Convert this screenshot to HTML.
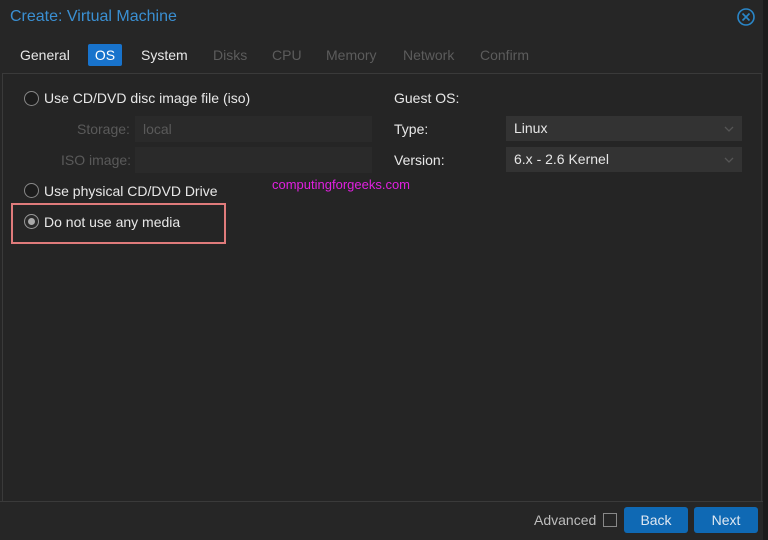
<!DOCTYPE html>
<html><head><style>
*{margin:0;padding:0;box-sizing:border-box}
body{width:768px;height:540px;background:#262626;font-family:"Liberation Sans",sans-serif;position:relative;overflow:hidden;color:#e8e8e8;font-size:14px}
.a{position:absolute;white-space:nowrap}
.tab{position:absolute;top:44px;height:22px;line-height:22px;font-size:14px}
.dis{color:#5c5c5c}
.radio{position:absolute;width:15px;height:15px;border-radius:50%;border:1.5px solid #888;background:#1c1c1c}
.lbl{color:#5a5a5a}
.field{position:absolute;background:#2a2a2a}
.sel{position:absolute;background:#333;height:25px;line-height:25px;padding-left:8px;color:#e6e6e6}
.btn{position:absolute;top:507px;height:26px;background:#0f69b4;border-radius:3px;color:#dfe8f2;text-align:center;line-height:26px}
</style></head><body>
<div class="a" style="left:10px;top:8px;font-size:16px;color:#3a8fd2">Create: Virtual Machine</div>
<svg class="a" style="left:736px;top:7px" width="20" height="20"><circle cx="10" cy="10" r="8" fill="none" stroke="#2a86c8" stroke-width="1.6"/><path d="M6.5 6.5L13.5 13.5M13.5 6.5L6.5 13.5" stroke="#2a86c8" stroke-width="1.6"/></svg>
<div class="tab" style="left:20px">General</div>
<div class="tab" style="left:88px;width:34px;background:#1873cc;border-radius:2px;text-align:center;color:#fff">OS</div>
<div class="tab" style="left:141px">System</div>
<div class="tab dis" style="left:213px">Disks</div>
<div class="tab dis" style="left:272px">CPU</div>
<div class="tab dis" style="left:326px">Memory</div>
<div class="tab dis" style="left:403px">Network</div>
<div class="tab dis" style="left:480px">Confirm</div>
<div class="a" style="left:2px;top:73px;width:760px;height:428px;background:#252525;border-top:1px solid #3a3a3a;border-left:1px solid #3a3a3a;border-right:1px solid #333"></div>
<div class="a" style="left:763px;top:0;width:5px;height:540px;background:#1b1b1b"></div>
<div class="radio" style="left:24px;top:91px"></div>
<div class="a" style="left:44px;top:90px">Use CD/DVD disc image file (iso)</div>
<div class="a lbl" style="left:77px;top:121px">Storage:</div>
<div class="field" style="left:135px;top:116px;width:237px;height:26px"></div>
<div class="a lbl" style="left:143px;top:121px">local</div>
<div class="a lbl" style="left:61px;top:152px">ISO image:</div>
<div class="field" style="left:135px;top:147px;width:237px;height:26px"></div>
<div class="radio" style="left:24px;top:183px"></div>
<div class="a" style="left:44px;top:183px">Use physical CD/DVD Drive</div>
<div class="a" style="left:11px;top:203px;width:215px;height:41px;border:2px solid #e07b7b"></div>
<div class="radio" style="left:24px;top:214px;border-color:#999;background:#2a2a2a"></div>
<div class="a" style="left:28px;top:218px;width:7px;height:7px;border-radius:50%;background:#aaa"></div>
<div class="a" style="left:44px;top:214px">Do not use any media</div>
<div class="a" style="left:272px;top:177px;font-size:13px;color:#e020e0">computingforgeeks.com</div>
<div class="a" style="left:394px;top:90px">Guest OS:</div>
<div class="a" style="left:394px;top:121px">Type:</div>
<div class="sel" style="left:506px;top:116px;width:236px">Linux</div>
<div class="a" style="left:394px;top:152px">Version:</div>
<div class="sel" style="left:506px;top:147px;width:236px">6.x - 2.6 Kernel</div>
<svg class="a" style="left:724px;top:125px" width="10" height="8"><path d="M1 2L5 6L9 2" fill="none" stroke="#555" stroke-width="1.3"/></svg>
<svg class="a" style="left:724px;top:156px" width="10" height="8"><path d="M1 2L5 6L9 2" fill="none" stroke="#555" stroke-width="1.3"/></svg>
<div class="a" style="left:0;top:501px;width:763px;height:1px;background:#3a3a3a"></div>
<div class="a" style="left:534px;top:512px;color:#bdbdbd">Advanced</div>
<div class="a" style="left:603px;top:513px;width:14px;height:14px;border:1.5px solid #888"></div>
<div class="btn" style="left:624px;width:64px">Back</div>
<div class="btn" style="left:694px;width:64px">Next</div>
</body></html>
